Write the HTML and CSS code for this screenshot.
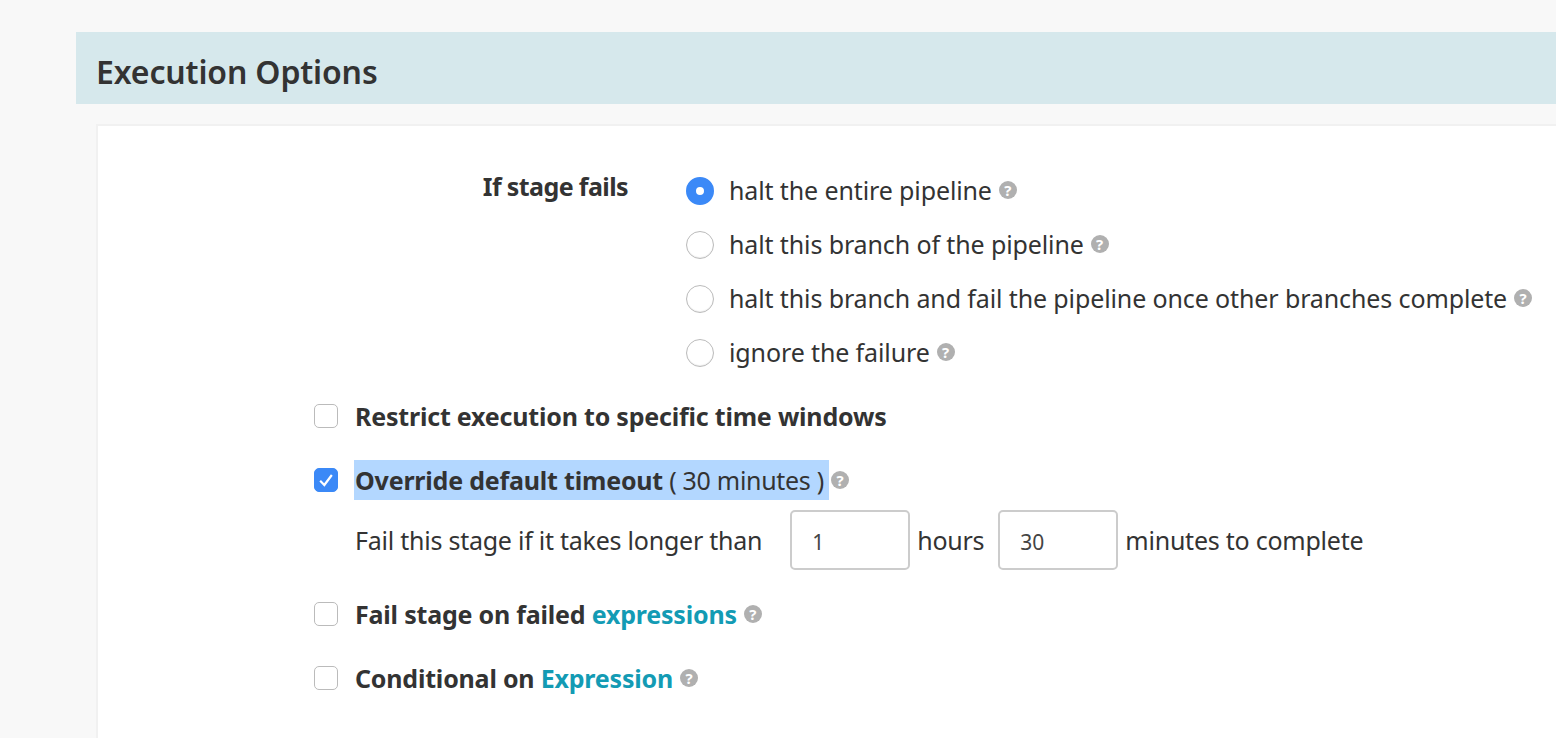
FILE: index.html
```html
<!DOCTYPE html>
<html lang="en">
<head>
    <meta charset="UTF-8">
    <title>Execution Options</title>
    <link rel="stylesheet" href="styles.css">
</head>
<body>
<div class="section-title"><h1>Execution Options</h1></div>
<div class="card">
    <!-- If stage fails -->
    <div class="fail-row">
        <div class="fail-label">If stage fails</div>
        <div class="fail-options">
            <div class="option"><span class="radio radio-on"></span>halt the entire pipeline<span class="help">?</span></div>
            <div class="option"><span class="radio"></span>halt this branch of the pipeline<span class="help">?</span></div>
            <div class="option"><span class="radio"></span>halt this branch and fail the pipeline once other branches complete<span class="help">?</span></div>
            <div class="option"><span class="radio"></span>ignore the failure<span class="help">?</span></div>
        </div>
    </div>
    <!-- Checkboxes -->
    <div class="check-row first">
        <span class="check"></span>
        <span class="check-text"><b>Restrict execution to specific time windows</b></span>
    </div>
    <div class="check-row timeout">
        <span class="check check-on">
            <svg viewBox="0 0 24 24" width="20" height="20"><path d="M5 13l5 5L19 6" fill="none" stroke="#fff" stroke-width="2.6"/></svg>
        </span>
        <span class="check-text selected"><b>Override default timeout</b> ( 30 minutes )</span><span class="help">?</span>
    </div>
    <div class="timeout-row">
        <span class="timeout-lead">Fail this stage if it takes longer than</span>
        <input class="num" type="text" value="1">
        <span>hours</span>
        <input class="num" type="text" value="30">
        <span>minutes to complete</span>
    </div>
    <div class="check-row">
        <span class="check"></span>
        <span class="check-text"><b>Fail stage on failed <a href="#">expressions</a></b></span><span class="help">?</span>
    </div>
    <div class="check-row">
        <span class="check"></span>
        <span class="check-text"><b>Conditional on <a href="#">Expression</a></b></span><span class="help">?</span>
    </div>
</div>
</body>
</html>
```

FILE: styles.css
```css
html, body {
    height: 100%;
    overflow: hidden;
}
body {
    font-family: "Noto Sans", sans-serif;
    font-size: 25px;
    letter-spacing: -0.12px;
    background-color: #f8f8f8;
    color: #333;
    margin: 0;
    padding: 32px 0 0 76px;
    box-sizing: border-box;
    display: flex;
    flex-direction: column;
}
b {
    font-weight: 700;
    letter-spacing: -0.2px;
}
a {
    color: #139bb4;
    text-decoration: none;
}
.section-title {
    height: 72px;
    flex: none;
    box-sizing: border-box;
    background: #d6e8ec;
    display: flex;
    align-items: center;
    padding: 6px 0 0 20px;
}
.section-title h1 {
    margin: 0;
    font-size: 32px;
    font-weight: 600;
    letter-spacing: -0.15px;
    color: #333;
}
.card {
    margin: 20px 0 0 20px;
    flex: 1;
    background: white;
    border: 2px solid #f1f1f1;
    border-right: none;
    border-bottom: none;
    padding: 37px 0 0 216px;
}
.fail-row {
    display: flex;
}
.fail-label {
    width: 314px;
    text-align: right;
    font-weight: 700;
    letter-spacing: -0.6px;
    line-height: 50px;
    margin-top: -2px;
}
.fail-options {
    margin-left: 58px;
}
.option {
    display: flex;
    align-items: center;
    height: 54px;
    white-space: nowrap;
}
.radio {
    width: 28px;
    height: 28px;
    margin-top: 2px;
    box-sizing: border-box;
    border: 1px solid #bbb;
    border-radius: 50%;
    margin-right: 15px;
    box-shadow: inset 0 -1px 1px #eee;
}
.radio-on {
    border: 10px solid #3b89f7;
    background: white;
    box-shadow: none;
}
.help {
    width: 18px;
    height: 18px;
    margin-left: 7px;
    border-radius: 50%;
    background: #b0b0b0;
    color: white;
    font-size: 15px;
    font-weight: 700;
    letter-spacing: 0;
    line-height: 18px;
    text-align: center;
    flex: none;
}
.check-row {
    display: flex;
    align-items: center;
    height: 40px;
    margin-top: 24px;
    white-space: nowrap;
}
.check-row.first {
    margin-top: 17px;
}
.check {
    width: 24px;
    height: 24px;
    box-sizing: border-box;
    border: 1px solid #bbb;
    border-radius: 5px;
    margin-right: 16px;
    flex: none;
}
.check-on {
    background: #3b89f7;
    border-color: #3b89f7;
    display: flex;
    align-items: center;
    justify-content: center;
}
.check-text {
    line-height: 40px;
    padding: 0 5px 0 1px;
}
.selected {
    letter-spacing: -0.3px;
}
.selected {
    background: #b3d7ff;
}
.check-row .help {
    margin-left: 2px;
}
.timeout-row {
    display: flex;
    align-items: center;
    height: 60px;
    margin-top: 10px;
    padding-left: 41px;
    white-space: nowrap;
    letter-spacing: -0.24px;
}
.timeout-lead {
    margin-right: 14px;
}
.num {
    width: 120px;
    height: 60px;
    box-sizing: border-box;
    border: 2px solid #ccc;
    border-radius: 5px;
    padding: 4px 0 0 20px;
    margin-right: 7px;
    font-family: "Noto Sans", sans-serif;
    font-size: 21px;
    color: #444;
}
.timeout-row span + .num {
    margin-left: 14px;
}
```
